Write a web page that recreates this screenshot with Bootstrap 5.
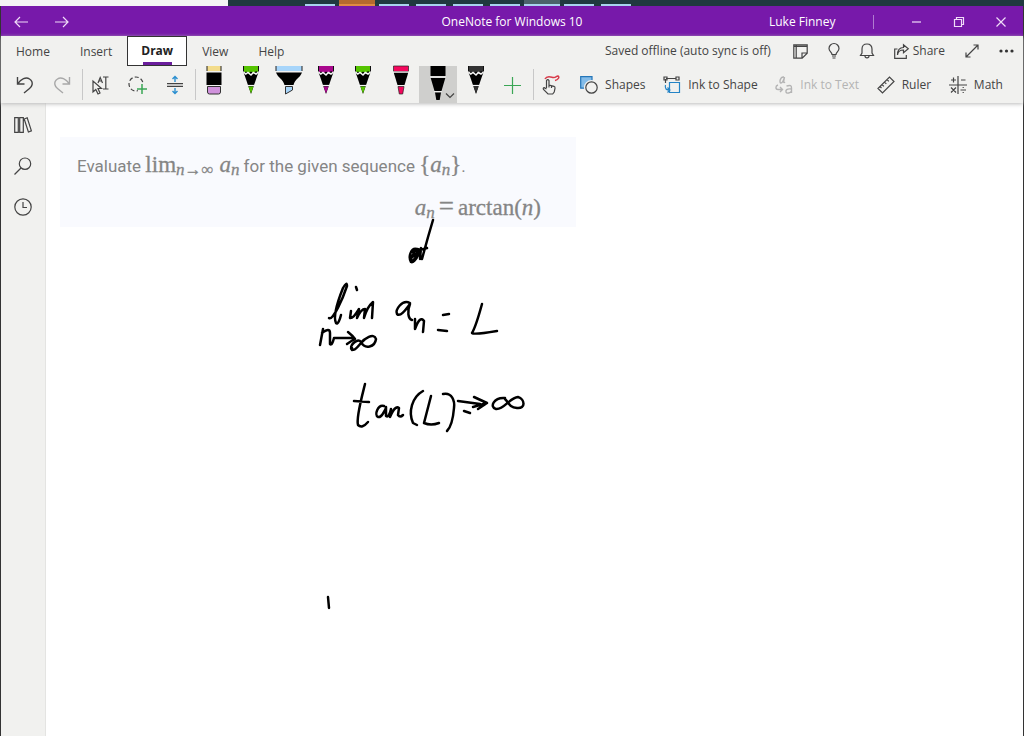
<!DOCTYPE html>
<html lang="en">
<head>
<meta charset="utf-8">
<meta name="viewport" content="width=device-width, initial-scale=1">
<title>OneNote for Windows 10</title>
<link rel="stylesheet" href="https://cdn.jsdelivr.net/npm/bootstrap@5.3.0/dist/css/bootstrap.min.css">
<style>
body{font:12px/16px "Open Sans","Noto Sans",sans-serif;color:#444;background:#fff}
button{font:inherit;color:inherit;background:none;border:0;padding:0;white-space:nowrap}
svg{display:block;flex:none;overflow:visible}
.ic{fill:none;stroke:#444;stroke-width:1.2}
.desk{height:6px;background:#20393f}
.desk .pale{width:228px;background:#f4f4f4;margin-right:77px}
.desk i{width:30px;border-bottom:2px solid #a9d3ee}
.desk .hot,.desk .lit{width:36px;margin:0 -3px}
.desk .hot{background:#b5692f;border-color:#e08a45}
.desk .lit{background:#4b626a}
.desk .tasks{gap:7px}
.win{border-left:1px solid #333;border-right:1px solid #333}
.title{height:30px;background:#7719aa;color:#fff;padding-top:2px}
.title .ic{stroke:#f0dcf8}
.title .nav-l{width:300px;padding-left:13px;gap:27px}
.title .nav-r{width:300px}
.title .user{margin-left:46px}
.title .bar{width:1px;height:14px;background:#b07bd0;margin:0 38px}
.title .sys{gap:32px}
.ribbon{background:#f1f1ef;box-shadow:0 1px 4px #bbb;position:relative;z-index:2}
.tabs{height:30px}
.tab{padding:8px 15px 6px;color:inherit;text-decoration:none}
.tab.on{padding:6px 13px;background:#fff;border:1px solid #333;height:30px;font-weight:700;color:#222;position:relative}
.tab.on::after{content:"";position:absolute;left:15px;right:14px;bottom:0;height:3px;background:#6a1d9c}
.status{margin-right:22px}
.acts{gap:20px;padding-right:9px}
.tools{height:37px}
.drawset{width:calc(55% + 7px);padding-left:5px;flex:none}
.drawset button{flex:1 1 0;display:flex;justify-content:center;align-items:center;height:37px;padding-top:1px}
.drawset .pen{align-items:flex-start;padding-top:0}
.drawset .sep{margin-left:1px;background:linear-gradient(#c8c8c8,#c8c8c8) left center/1px 31px no-repeat}
.drawset .sel{background:#cfcfcd;position:relative}
.drawset .chev{position:absolute;right:3px;bottom:5px}
.cmds{padding:1px 20px 0 10px}
.cmds button{display:flex;align-items:center;gap:7px}
.cmds .off{color:#b4b4b4}
.side{width:45px;background:#f1f1ef;border-right:1px solid #e4e4e2;gap:23px;padding-top:13px}
.side button{height:18px}
.page{min-height:calc(100vh - 103px);position:relative;overflow:hidden}
.problem{width:516px;margin:34px 0 0 14px;padding:15px 17px 5px;background:#f9fafe;color:#858585;font:17px/26px Roboto,sans-serif}
.tex{font-family:"Liberation Serif",serif;font-size:23px;-webkit-text-stroke:.3px #858585}
.tex sub{font-size:17px;bottom:-3px}
.tex .rel{margin:0 4px;font-size:27px;line-height:20px}
.eq{margin-top:16px;padding-right:18px}
.ink{position:absolute;left:0;top:0;fill:none;stroke:#000;stroke-width:2.5;stroke-linecap:round;stroke-linejoin:round}
</style>
</head>
<body>
<div class="desk d-flex"><div class="pale"></div>
<div class="tasks d-flex"><i></i><i class="hot"></i><i></i><i></i><i></i><i></i><i class="lit"></i><i></i><i></i></div></div>
<div class="win">
<header class="title d-flex align-items-center justify-content-between">
<div class="nav-l d-flex">
<button aria-label="Back"><svg class="ic" width="14" height="12" viewBox="0 0 14 12"><path d="M14 6H1M6 1L1 6l5 5"/></svg></button>
<button aria-label="Forward"><svg class="ic" width="14" height="12" viewBox="0 0 14 12"><path d="M0 6h13M8 1l5 5-5 5"/></svg></button>
</div>
<div>OneNote for Windows 10</div>
<div class="nav-r d-flex align-items-center">
<span class="user text-nowrap">Luke Finney</span><span class="bar"></span>
<div class="sys d-flex align-items-center">
<button aria-label="Minimise"><svg class="ic" width="10" height="10"><path d="M0 5h9"/></svg></button>
<button aria-label="Restore"><svg class="ic" width="10" height="10"><path d="M.5 2.500h7v7h-7zM2.500 2.500v-2h7v7h-2"/></svg></button>
<button aria-label="Close"><svg class="ic" width="10" height="10"><path d="M.5.5l9 9M9.500.5l-9 9"/></svg></button>
</div></div>
</header>
<div class="ribbon">
<div class="tabs d-flex align-items-center">
<nav class="d-flex align-items-center me-auto"><a class="tab" href="#">Home</a><a class="tab" href="#">Insert</a><a class="tab on" href="#">Draw</a><a class="tab" href="#">View</a><a class="tab" href="#">Help</a></nav>
<span class="status text-nowrap">Saved offline (auto sync is off)</span>
<div class="acts d-flex align-items-center">
<button aria-label="Feed"><svg class="ic" width="15" height="15" viewBox="0 0 15 15"><path d="M.8.800h13.400v8.400l-5 5H.8zM3.200.8v13.400M1 2.300h13M14 9H9v5"/></svg></button>
<button aria-label="Tell me"><svg class="ic" width="12" height="16" viewBox="0 0 12 16"><path d="M4 11.500C4 9 1 8.500 1 5.500a5 5 0 0 1 10 0c0 3-3 3.500-3 6zM4 13h4M4.500 15h3"/></svg></button>
<button aria-label="Notifications"><svg class="ic" width="14" height="16" viewBox="0 0 14 16"><path d="M.5 12.500h13L12 10V6C12 3 10 1 7 1S2 3 2 6v4zM5 13c0 2.500 4 2.500 4 0"/></svg></button>
<button class="d-flex align-items-center gap-1"><svg class="ic" width="15" height="15" viewBox="0 0 15 15"><path d="M3.500 5H.7v9.300h11.600V11M3.500 11c.5-3.800 2.500-5 6-5V8.800L14.300 4.800 9.500.8V3.500C5.500 3.500 3.500 6 3.500 11z"/></svg>Share</button>
<button aria-label="Full screen"><svg class="ic" width="14" height="14"><path d="M1 13L13 1M8.500 1H13v4.500M1 8.500V13h4.500"/></svg></button>
<button aria-label="More"><svg width="15" height="4" fill="#333"><circle cx="2" cy="2" r="1.600"/><circle cx="7.500" cy="2" r="1.600"/><circle cx="13" cy="2" r="1.600"/></svg></button>
</div></div>
<svg width="0" height="0" class="position-absolute"><defs>
<g id="pencil"><path d="M.5 0h15v6L8 28 .5 6z" fill="#000"/><path d="M1 0h14v6.500l-2-1.500-2.300 2.500L8 5.500 5.500 7.500 3 5.500 1 6.500z" fill="currentColor"/><path d="M.5 6l2.300 2 2.200-1.500 3 2.500 2.300-2.500L13 8l2.500-2" fill="none" stroke="#f8f8f8" stroke-width="1.500"/><path d="M.5 0v5M15.500 0v5" stroke="#111"/><path d="M5.500 20.500h5L8 27.500z" fill="currentColor"/><path d="M3 19.500h10" stroke="#f5f5f5" stroke-width="1.200"/></g>
<g id="marker"><path d="M.5 0h15v5.500H.5z" fill="currentColor" stroke="#222" stroke-width=".7"/><path d="M.7 6.500h14.600L11.500 19h-7z" fill="#000"/><path d="M5 20.500h6L9.700 28H6.300z" fill="currentColor" stroke="#222" stroke-width=".7"/><path d="M0 6h16" stroke="#fff"/></g>
</defs></svg>
<div class="tools d-flex">
<div class="drawset d-flex">
<button aria-label="Undo"><svg class="ic" width="18" height="18" viewBox="0 0 18 18"><path d="M1.500 1v7h7M1.500 8C5 3 10 .5 13.500 3c5 3.500 2 8 0 9.500L8 17" stroke-width="1.400"/></svg></button>
<button aria-label="Redo"><svg class="ic" width="18" height="18" viewBox="0 0 18 18" style="stroke:#a8a8a8"><path d="M16.500 1v7h-7M16.500 8C13 3 8 .5 4.500 3c-5 3.500-2 8 0 9.500L10 17" stroke-width="1.400"/></svg></button>
<button class="sep" aria-label="Select objects or type text"><svg class="ic" width="18" height="18" viewBox="0 0 18 18"><path d="M1 5v11l2.800-2.500L6 18l2-1-2-4.500h3.500zM11 1h5.500M13.800 1v12M11 13h5.500M6 7l2.200-5.500L10.500 7M7 5h2.800"/></svg></button>
<button aria-label="Lasso select"><svg class="ic" width="20" height="18" viewBox="0 0 20 18"><circle cx="8" cy="8" r="7" stroke-dasharray="4 2.300"/><path d="M10 8h9v9h-9z" fill="#f1f1ef" stroke="none"/><path d="M14 8v10M9 13h10" stroke="#3aa655" stroke-width="1.500"/></svg></button>
<button aria-label="Insert space"><svg class="ic" width="18" height="20" viewBox="0 0 18 20"><path d="M1 8.700h16M1 11.300h16" stroke-width="1.300"/><path d="M9 7V1.500M6.500 4L9 1.500 11.500 4M9 13v5.500M6.500 16L9 18.500l2.500-2.500" stroke="#2b8fd0" stroke-width="1.400"/></svg></button>
<button class="sep pen" aria-label="Eraser"><svg width="16" height="29" viewBox="0 0 16 29"><path d="M1 0h14v5H1z" fill="#f3dc8b"/><path d="M1 0v5M15 0v5" stroke="#222"/><path d="M.5 6.500h15V19H.5z"/><path d="M1.500 20.500h13V26q0 2-2 2h-9q-2 0-2-2z" fill="#d092dc" stroke="#333"/></svg></button>
<button class="pen" aria-label="Green pencil" style="color:#55c400"><svg width="16" height="29"><use href="#pencil"/></svg></button>
<button class="pen" aria-label="Blue highlighter"><svg width="28" height="29" viewBox="0 0 28 29"><path d="M1 0h26v5H1z" fill="#a7d5fa"/><path d="M1 0v5M27 0v5" stroke="#222"/><path d="M1 6.500h26C25 12 20 13 18.500 19h-9C8 13 3 12 1 6.500z"/><path d="M10.500 20.500h7V24l-7 4z" fill="#a7d5fa" stroke="#333"/></svg></button>
<button class="pen" aria-label="Magenta pencil" style="color:#a9088d"><svg width="16" height="29"><use href="#pencil"/></svg></button>
<button class="pen" aria-label="Green pencil 2" style="color:#55c400"><svg width="16" height="29"><use href="#pencil"/></svg></button>
<button class="pen" aria-label="Red marker" style="color:#f4075d"><svg width="16" height="29"><use href="#marker"/></svg></button>
<button class="pen sel" aria-label="Black marker" style="color:#000"><svg width="16" height="34" viewBox="0 0 16 34"><path d="M.5 0h15v10H.5zM.7 12h14.600L11.500 25h-7zM5 26.500h6L9.700 34H6.300z"/><path d="M0 11h16M4 25.500h8" stroke="#eee"/></svg><svg class="ic chev" width="8" height="5"><path d="M0 .5l4 4 4-4"/></svg></button>
<button class="pen" aria-label="Black pencil" style="color:#333"><svg width="16" height="29"><use href="#pencil"/></svg></button>
<button aria-label="Add pen"><svg class="ic" width="17" height="17" style="stroke:#3aa655"><path d="M8.500 0v17M0 8.500h17"/></svg></button>
<button class="sep" aria-label="Draw with touch"><svg class="ic" width="18" height="20" viewBox="0 0 18 20"><path d="M4.500 13V5.500q1.300-1.800 2.500 0V10l5 1.300q1.300.4 1 2l-.8 3.700-1.500 2H6L1.500 14.500q-.8-1.500.8-1.800L4.500 14M9.500 11v2M7 10v2.500"/><path d="M3 4c2-4 6-2 8-1.500 3 .5 3.500-2 5-1.500 2 1 0 4-3 4.500" stroke="#d83b4a" stroke-width="1.500"/></svg></button>
</div>
<div class="cmds d-flex flex-fill justify-content-between">
<button><svg class="ic" width="18" height="18" viewBox="0 0 18 18"><path d="M.7.700H12v11.500H.7z" fill="#84bce8" stroke="#2476b8"/><circle cx="11.500" cy="11.500" r="6.600" fill="#f1f1ef" stroke="#f1f1ef" stroke-width="2"/><circle cx="11.500" cy="11.500" r="5.700"/></svg>Shapes</button>
<button><svg class="ic" width="18" height="18" viewBox="0 0 18 18"><path d="M3 2.500h10M2.500 3v4M1 1h3v3H1zM13 1h3v3h-3z"/><path d="M6.500 6.500h10v10h-10zM2.500 9c-1 4 1 5 4 5M4.500 11.500L7 14l-2.500 2.500" stroke="#2484c6"/></svg>Ink to Shape</button>
<button class="off" disabled><svg class="ic" width="18" height="18" viewBox="0 0 18 18" style="stroke:#b4b4b4"><path d="M9 1C5 .5 4 7 6 7c2 0 3-4 3.500-6L8.500 6q.5 1 1.500 0M3 9c-3 1-2.500 4.500 0 4.500h4M5 11l2.500 2.500L5 16M11.500 10c4-1 5-.5 5 2v5M16.500 13c-5-.5-6 1-5.500 3s5 1 5.500-1" stroke-width="1.400"/></svg>Ink to Text</button>
<button><svg class="ic" width="18" height="18" viewBox="0 0 18 18"><path d="M1 12.500L12.500 1 17 5.500 5.500 17zM5 8.500l1.800 1.800M7.500 6l1.800 1.800M10 3.500l1.800 1.800M3 10.500l1.500 1.500"/></svg>Ruler</button>
<button><svg class="ic" width="18" height="18" viewBox="0 0 18 18"><path d="M9 0v18M0 9h18M4.500 1.500v5M2 4h5M12 4h4.500M2 11.500l5 5M7 11.500l-5 5M11.500 14h5.500M14.200 11v1M14.200 16v1"/></svg>Math</button>
</div></div></div>
<div class="d-flex">
<aside class="side d-flex flex-column align-items-center flex-shrink-0">
<button aria-label="Notebooks"><svg class="ic" width="18" height="16" viewBox="0 0 18 16"><path d="M.7.700h3.600v14.600H.7zM5.700.7h3.600v14.600H5.700zM10.200 2l3-1.200 4.200 13-3 1.200z"/></svg></button>
<button aria-label="Search"><svg class="ic" width="18" height="18" viewBox="0 0 18 18"><circle cx="11" cy="6.700" r="5.700"/><path d="M7 11l-6.500 6.500"/></svg></button>
<button aria-label="Recent"><svg class="ic" width="18" height="18" viewBox="0 0 18 18"><circle cx="9" cy="9" r="8.200"/><path d="M9 4v5.500h4"/></svg></button>
</aside>
<main class="page flex-fill">
<section class="problem">
<div>Evaluate <span class="tex">lim<sub><i>n</i>→∞</sub> <i>a<sub>n</sub></i></span> for the given sequence <span class="tex">{<i>a<sub>n</sub></i>}</span>.</div>
<div class="eq text-end"><span class="tex"><i>a<sub>n</sub></i><span class="rel">=</span>arctan(<i>n</i>)</span></div>
</section>
<svg class="ink" width="978" height="632" viewBox="46 103 978 632" role="img" aria-label="Handwritten working">
<path d="M433 220C430 230 426 244 422 259M417 249C411 247 408 257 411 262C415 264 423 248 417 249C413 253 408 262 414 261L421 248L420 259M413 252l14-4M411 258l9-7M412 262l8-10"/>
<path d="M329 318C333 321 343 298 347 286Q347 281 343 288C337 303 333 317 336 323C338 325 340 319 341 315M356 287l1 3M351 311L350 318Q353 319 359 309L357 318Q361 309 365 309L364 318Q367 307 373 302L372 318"/>
<path d="M323 329L320 345M322 333Q330 327 330 333L330 344Q332 346 334 338M334 338H353M348 332Q353 336 355 339Q351 341 347 344M352 350C348 347 357 337 361 342C365 350 375 347 376 339C374 332 364 339 361 343C356 349 353 352 352 348"/>
<path d="M410 303C402 299 395 310 397 314C401 318 408 306 410 304C407 311 408 319 412 320M415 319L415 329Q420 315 424 321L423 332M443 315l6-1M438 330l9 1M482 304C479 315 475 328 472 333Q474 335 497 331"/>
<path d="M365 384C361 400 356 418 358 425Q362 429 368 422M354 401L369 402M384 406C378 404 374 415 378 417C382 418 386 408 386 407L386 416Q389 418 391 409L390 417Q395 405 399 408L398 415Q400 418 403 415"/>
<path d="M423 391C412 397 408 412 413 423L417 425M431 396L424 423Q431 426 439 423M443 394C452 392 455 401 454 408C453 420 450 428 447 431M458 401l22 3M464 411l6 2M474 397L487 403L478 409M473 407l14-4"/>
<path d="M505 398C494 397 489 407 496 409C504 410 509 398 518 397C525 399 526 409 517 408C509 407 509 403 505 399M328 597l1 11"/>
</svg>
</main></div></div>
<script src="https://cdn.jsdelivr.net/npm/bootstrap@5.3.0/dist/js/bootstrap.bundle.min.js"></script>
</body></html>
